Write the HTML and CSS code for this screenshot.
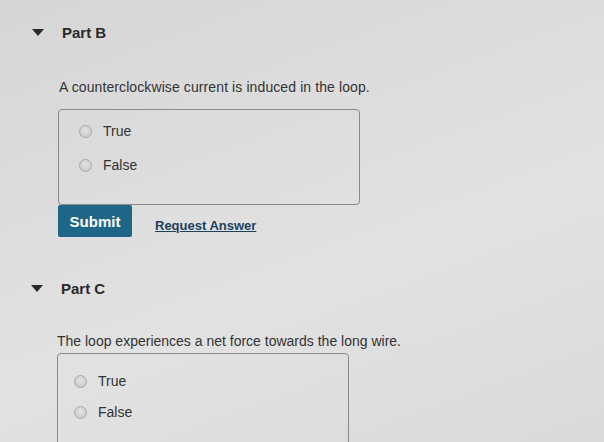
FILE: index.html
```html
<!DOCTYPE html>
<html>
<head>
<meta charset="utf-8">
<link rel="stylesheet" href="styles.css">
</head>
<body>
<div class="page">
  <section class="part part-b">
    <div class="part-head"><span class="tri"></span><h2>Part B</h2></div>
    <p class="prompt">A counterclockwise current is induced in the loop.</p>
    <div class="choices">
      <label class="choice"><span class="radio"></span>True</label>
      <label class="choice"><span class="radio"></span>False</label>
    </div>
    <div class="actions">
      <button class="submit">Submit</button>
      <a class="request" href="#">Request Answer</a>
    </div>
  </section>
  <section class="part part-c">
    <div class="part-head"><span class="tri"></span><h2>Part C</h2></div>
    <p class="prompt">The loop experiences a net force towards the long wire.</p>
    <div class="choices choices-c">
      <label class="choice"><span class="radio"></span>True</label>
      <label class="choice"><span class="radio"></span>False</label>
    </div>
  </section>
</div>
</body>
</html>
```
FILE: styles.css
```css
html, body {
  margin: 0;
  padding: 0;
  height: 100%;
  overflow: hidden;
}
body {
  background: linear-gradient(160deg, #d6d6d6 0%, #dcdcdc 30%, #e2e2e2 60%, #dadada 100%);
  font-family: "Liberation Sans", Arial, sans-serif;
  color: #333;
}
.page {
  padding-top: 22px;
}
.part {
  padding-left: 58px;
}
.part-head {
  display: flex;
  align-items: center;
  margin-left: -26px;
  height: 20px;
}
.tri {
  width: 0;
  height: 0;
  border-left: 6px solid transparent;
  border-right: 6px solid transparent;
  border-top: 7px solid #2a2a2a;
  margin-right: 18px;
}
.part-head h2 {
  margin: 0;
  font-size: 15px;
  font-weight: bold;
  color: #2a2a2a;
}
.prompt {
  margin: 36px 0 0 1px;
  font-size: 14px;
  line-height: 18px;
  color: #333;
  letter-spacing: 0.1px;
}
.choices {
  margin-top: 13px;
  width: 302px;
  height: 96px;
  border: 1px solid #8a8a8a;
  border-radius: 4px;
  box-sizing: border-box;
  padding: 11px 0 0 20px;
  display: flex;
  flex-direction: column;
  gap: 14px;
}
.choice {
  display: flex;
  align-items: center;
  font-size: 14px;
  line-height: 20px;
  color: #333;
}
.radio {
  width: 13px;
  height: 13px;
  border-radius: 50%;
  border: 1px solid #a8a8a8;
  background: radial-gradient(circle at 50% 40%, #e4e4e4 0%, #c4c4c4 100%);
  box-sizing: border-box;
  margin-right: 11px;
}
.actions {
  display: flex;
  align-items: center;
  margin-top: 0;
  gap: 23px;
}
.submit {
  background: #1d6688;
  color: #fff;
  border: none;
  border-radius: 2px;
  font-family: "Liberation Sans", Arial, sans-serif;
  font-size: 15px;
  font-weight: bold;
  width: 74px;
  height: 32px;
  padding: 0;
}
.request {
  color: #1c3f5c;
  font-size: 13px;
  font-weight: bold;
  text-decoration: underline;
  margin-top: 8px;
}
.part-c {
  margin-top: 41px;
  padding-left: 57px;
}
.part-c .prompt {
  margin-top: 34px;
  margin-left: 0;
  letter-spacing: 0;
}
.choices-c {
  margin-top: 3px;
  width: 292px;
  height: 110px;
  padding: 17px 0 0 16px;
  gap: 11px;
}
```
